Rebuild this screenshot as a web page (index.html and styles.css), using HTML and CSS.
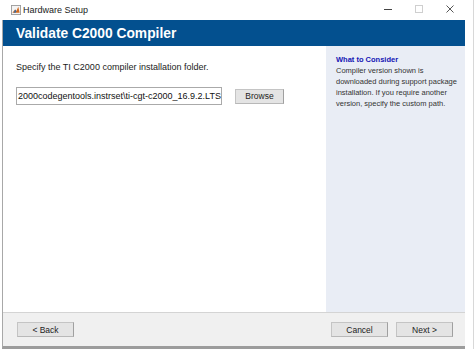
FILE: index.html
```html
<!DOCTYPE html>
<html>
<head>
<meta charset="utf-8">
<link rel="stylesheet" href="styles.css">
</head>
<body>
<div class="window">
  <div class="titlebar">
    <svg class="appicon" width="10" height="10" viewBox="0 0 11 11">
      <rect x="0.5" y="0.5" width="10" height="10" fill="#f4f4f4" stroke="#9a9a9a"/>
      <path d="M1.5 8.5 L4.5 5 L6 6.5 L8 2 L9.5 8.5 Z" fill="#d2691e"/>
      <path d="M4.5 5 L6 6.5 L5 8.5 L3 8.5 Z" fill="#3a6ea5"/>
    </svg>
    <span class="title">Hardware Setup</span>
    <div class="controls">
      <svg width="8" height="8" viewBox="0 0 8 8"><path d="M0 4.5 H8" stroke="#444" stroke-width="1"/></svg>
      <svg width="8" height="8" viewBox="0 0 8 8"><rect x="0.5" y="0.5" width="7" height="7" fill="none" stroke="#cfcfcf"/></svg>
      <svg width="8" height="8" viewBox="0 0 8 8"><path d="M0.5 0.5 L7.5 7.5 M7.5 0.5 L0.5 7.5" stroke="#444" stroke-width="0.9"/></svg>
    </div>
  </div>
  <div class="frame">
    <div class="header">Validate C2000 Compiler</div>
    <div class="body">
      <div class="main">
        <p class="prompt">Specify the TI C2000 compiler installation folder.</p>
        <div class="pathrow">
          <div class="pathbox">2000codegentools.instrset\ti-cgt-c2000_16.9.2.LTS</div>
          <div class="btn browse">Browse</div>
        </div>
      </div>
      <div class="side">
        <div class="side-title">What to Consider</div>
        <div class="side-text">Compiler version shown is downloaded during support package installation. If you require another version, specify the custom path.</div>
      </div>
    </div>
    <div class="footer">
      <div class="btn nav">&lt; Back</div>
      <div class="spacer"></div>
      <div class="btn nav">Cancel</div>
      <div class="btn nav">Next &gt;</div>
    </div>
  </div>
</div>
</body>
</html>
```
FILE: styles.css
```css
html, body {
  margin: 0;
  padding: 0;
  background: #ffffff;
}
body {
  width: 474px;
  height: 349px;
  overflow: hidden;
  font-family: "Liberation Sans", Arial, sans-serif;
}
.window {
  width: 474px;
  height: 349px;
  display: flex;
  flex-direction: column;
  background: #fff;
  border-right: 1px solid #d8d8d8;
  box-sizing: border-box;
}
.titlebar {
  height: 20px;
  display: flex;
  align-items: center;
  padding-left: 11px;
  background: #fff;
}
.appicon {
  margin-right: 2px;
}
.title {
  font-family: "Liberation Sans", Arial, sans-serif;
  font-size: 9px;
  color: #222;
}
.controls {
  margin-left: auto;
  display: flex;
  gap: 23px;
  padding-right: 19px;
  align-items: center;
  margin-top: -2px;
}
.frame {
  flex: 1;
  display: flex;
  flex-direction: column;
  margin-left: 2px;
  margin-right: 8px;
  border-left: 1px solid #a8a8a8;
  border-bottom: 3px solid #9c9c9c;
}
.header {
  height: 26px;
  background: #03508f;
  color: #fff;
  font-weight: bold;
  font-size: 13.8px;
  display: flex;
  align-items: center;
  padding-left: 13px;
}
.body {
  flex: 1;
  display: flex;
  border-bottom: 1px solid #d4d4d4;
}
.main {
  flex: 1;
  padding-left: 13px;
  padding-top: 16px;
}
.prompt {
  margin: 0;
  font-size: 9px;
  color: #222;
}
.pathrow {
  display: flex;
  align-items: center;
  margin-top: 15px;
}
.pathbox {
  width: 203px;
  height: 16px;
  border: 1px solid #aaa;
  font-size: 9px;
  line-height: 16px;
  padding-left: 1px;
  color: #111;
  white-space: nowrap;
  overflow: hidden;
  box-sizing: content-box;
}
.btn {
  background: #e4e4e4;
  border: 1px solid #c4c4c4;
  border-right-color: #a0a0a0;
  border-bottom-color: #b8b8b8;
  font-size: 8.5px;
  color: #222;
  display: flex;
  align-items: center;
  justify-content: center;
  box-sizing: border-box;
}
.browse {
  width: 49px;
  height: 15px;
  margin-left: 13px;
}
.side {
  width: 139px;
  background: #e9edf5;
  padding: 8px 0 0 10px;
  box-sizing: border-box;
}
.side-title {
  color: #1414b4;
  font-weight: bold;
  font-size: 7.5px;
  line-height: 11px;
}
.side-text {
  font-size: 7.5px;
  line-height: 11px;
  color: #333;
}
.footer {
  height: 33px;
  background: #f0f0f0;
  display: flex;
  align-items: center;
  padding-left: 14px;
  padding-right: 12px;
  gap: 8px;
}
.spacer {
  flex: 1;
}
.nav {
  width: 57px;
  height: 15px;
}
```
